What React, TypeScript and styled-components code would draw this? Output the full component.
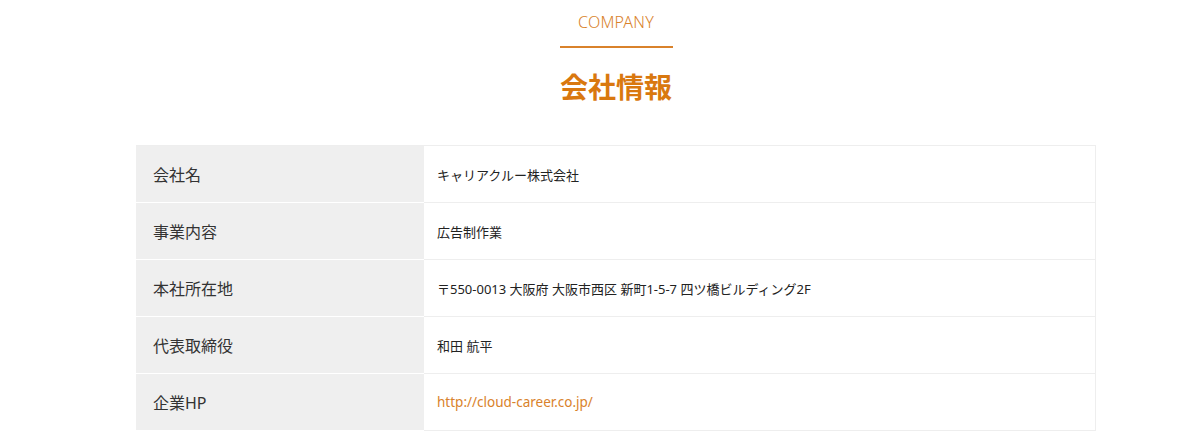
import { Fragment } from 'react';
import styled, { createGlobalStyle } from 'styled-components';

const GlobalStyle = createGlobalStyle`
  body {
    margin: 0;
    background: #ffffff;
    font-family: "Noto Sans", "Noto Sans CJK JP", sans-serif;
    color: #333333;
  }
`;

const Section = styled.section`
  width: 960px;
  margin-left: 136px;
  padding-top: 11px;
`;

const Heading = styled.header`
  display: flex;
  flex-direction: column;
  align-items: center;
`;

const SubTitle = styled.p`
  margin: 0;
  font-size: 16px;
  line-height: 22px;
  font-weight: 300;
  color: #d9822b;
  letter-spacing: 0.2px;
`;

const Rule = styled.span`
  display: block;
  width: 113px;
  height: 2px;
  margin-top: 13px;
  background: #d9822b;
`;

const Title = styled.h2`
  margin: 18px 0 0;
  font-size: 28px;
  line-height: 40px;
  font-weight: 700;
  color: #d9780f;
  font-family: "Noto Sans CJK JP", sans-serif;
`;

const Table = styled.dl`
  display: grid;
  grid-template-columns: 288px 1fr;
  margin: 39px 0 0;
  border-top: 1px solid #eeeeee;
`;

const Label = styled.dt`
  display: flex;
  align-items: center;
  height: 56px;
  padding-left: 17px;
  background: #efefef;
  border-bottom: 1px solid #ffffff;
  font-size: 16px;
  color: #333333;
`;

const Value = styled.dd`
  display: flex;
  align-items: center;
  height: 56px;
  margin: 0;
  padding-left: 13px;
  border-right: 1px solid #eeeeee;
  border-bottom: 1px solid #eeeeee;
  font-size: 13px;
  color: #222222;
`;

const Link = styled.a`
  color: #d9822b;
  text-decoration: none;
  font-size: 13.5px;
`;

const rows: { label: string; value: string; href?: string }[] = [
  { label: '会社名', value: 'キャリアクルー株式会社' },
  { label: '事業内容', value: '広告制作業' },
  { label: '本社所在地', value: '〒550-0013 大阪府 大阪市西区 新町1-5-7 四ツ橋ビルディング2F' },
  { label: '代表取締役', value: '和田 航平' },
  { label: '企業HP', value: 'http://cloud-career.co.jp/', href: 'http://cloud-career.co.jp/' },
];

export default function App() {
  return (
    <>
      <GlobalStyle />
      <Section>
        <Heading>
          <SubTitle>COMPANY</SubTitle>
          <Rule />
          <Title>会社情報</Title>
        </Heading>
        <Table>
          {rows.map((row) => (
            <Fragment key={row.label}>
              <Label>{row.label}</Label>
              <Value>
                {row.href ? <Link href={row.href}>{row.value}</Link> : row.value}
              </Value>
            </Fragment>
          ))}
        </Table>
      </Section>
    </>
  );
}
